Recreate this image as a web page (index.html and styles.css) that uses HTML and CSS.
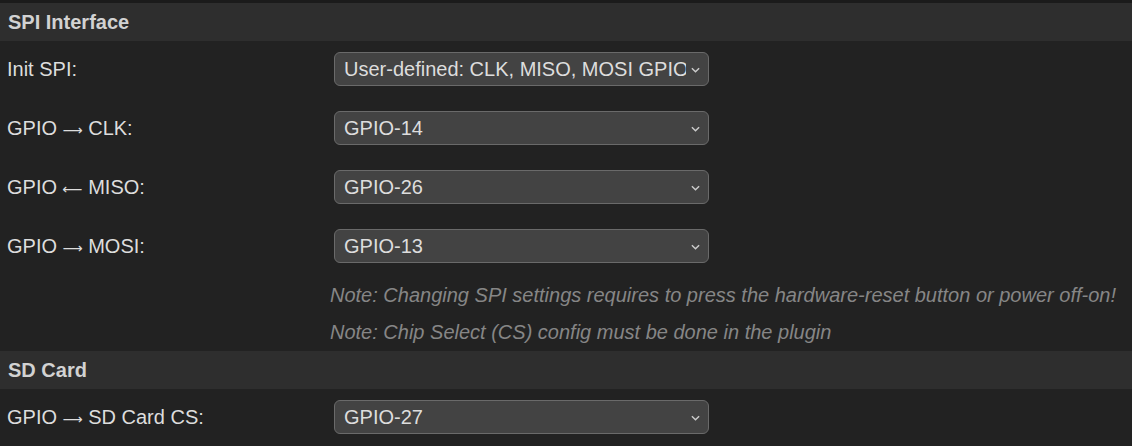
FILE: index.html
```html
<!DOCTYPE html>
<html lang="en">
<head>
    <meta charset="UTF-8">
    <title>Hardware Settings</title>
    <link rel="stylesheet" href="styles.css">
</head>
<body>
    <div class="settings">
        <!-- SPI -->
        <div class="section-head">SPI Interface</div>
        <div class="row">
            <label class="row-label">Init SPI:</label>
            <div class="field-wrap">
                <select class="field">
                    <option>User-defined: CLK, MISO, MOSI GPIO</option>
                </select>
                <svg class="chevron" viewBox="0 0 10 6"><path d="M1 1 L5 5 L9 1"/></svg>
            </div>
        </div>
        <div class="row">
            <label class="row-label">GPIO <span class="arrow">&#x27F6;</span> CLK:</label>
            <div class="field-wrap">
                <select class="field"><option>GPIO-14</option></select>
                <svg class="chevron" viewBox="0 0 10 6"><path d="M1 1 L5 5 L9 1"/></svg>
            </div>
        </div>
        <div class="row">
            <label class="row-label">GPIO <span class="arrow">&#x27F5;</span> MISO:</label>
            <div class="field-wrap">
                <select class="field"><option>GPIO-26</option></select>
                <svg class="chevron" viewBox="0 0 10 6"><path d="M1 1 L5 5 L9 1"/></svg>
            </div>
        </div>
        <div class="row">
            <label class="row-label">GPIO <span class="arrow">&#x27F6;</span> MOSI:</label>
            <div class="field-wrap">
                <select class="field"><option>GPIO-13</option></select>
                <svg class="chevron" viewBox="0 0 10 6"><path d="M1 1 L5 5 L9 1"/></svg>
            </div>
        </div>
        <div class="note">Note: Changing SPI settings requires to press the hardware-reset button or power off-on!</div>
        <div class="note">Note: Chip Select (CS) config must be done in the plugin</div>

        <!-- SD card -->
        <div class="section-head">SD Card</div>
        <div class="row">
            <label class="row-label">GPIO <span class="arrow">&#x27F6;</span> SD Card CS:</label>
            <div class="field-wrap">
                <select class="field"><option>GPIO-27</option></select>
                <svg class="chevron" viewBox="0 0 10 6"><path d="M1 1 L5 5 L9 1"/></svg>
            </div>
        </div>
    </div>
</body>
</html>
```

FILE: styles.css
```css
body {
    margin: 0;
    background-color: #222;
    color: #ddd;
    font-family: "Liberation Sans", Arial, sans-serif;
    font-size: 20px;
}

.settings {
    border-top: 3px solid #1b1b1b;
}

.section-head {
    height: 38px;
    line-height: 38px;
    padding-left: 8px;
    background-color: #2e2e2e;
    color: #d2d2d2;
    font-weight: bold;
}

.row {
    display: grid;
    grid-template-columns: 334px 375px;
    align-items: center;
    padding: 11px 0 14px;
}

.row-label {
    padding-left: 7px;
}

.arrow {
    font-family: "DejaVu Sans", sans-serif;
    font-size: 14px;
}

.field-wrap {
    position: relative;
}

.field {
    display: block;
    width: 100%;
    height: 34px;
    padding: 0 22px 0 9px;
    font-family: inherit;
    font-size: 20px;
    color: #ddd;
    background-color: #434343;
    border: 1px solid #6a6a6a;
    border-radius: 6px;
    appearance: none;
}

.chevron {
    position: absolute;
    right: 9px;
    top: 15px;
    width: 9px;
    height: 6px;
    fill: none;
    stroke: #ccc;
    stroke-width: 1.6;
    pointer-events: none;
}

.note {
    height: 37px;
    line-height: 37px;
    padding-left: 330px;
    color: #868686;
    font-style: italic;
    white-space: nowrap;
}
```
